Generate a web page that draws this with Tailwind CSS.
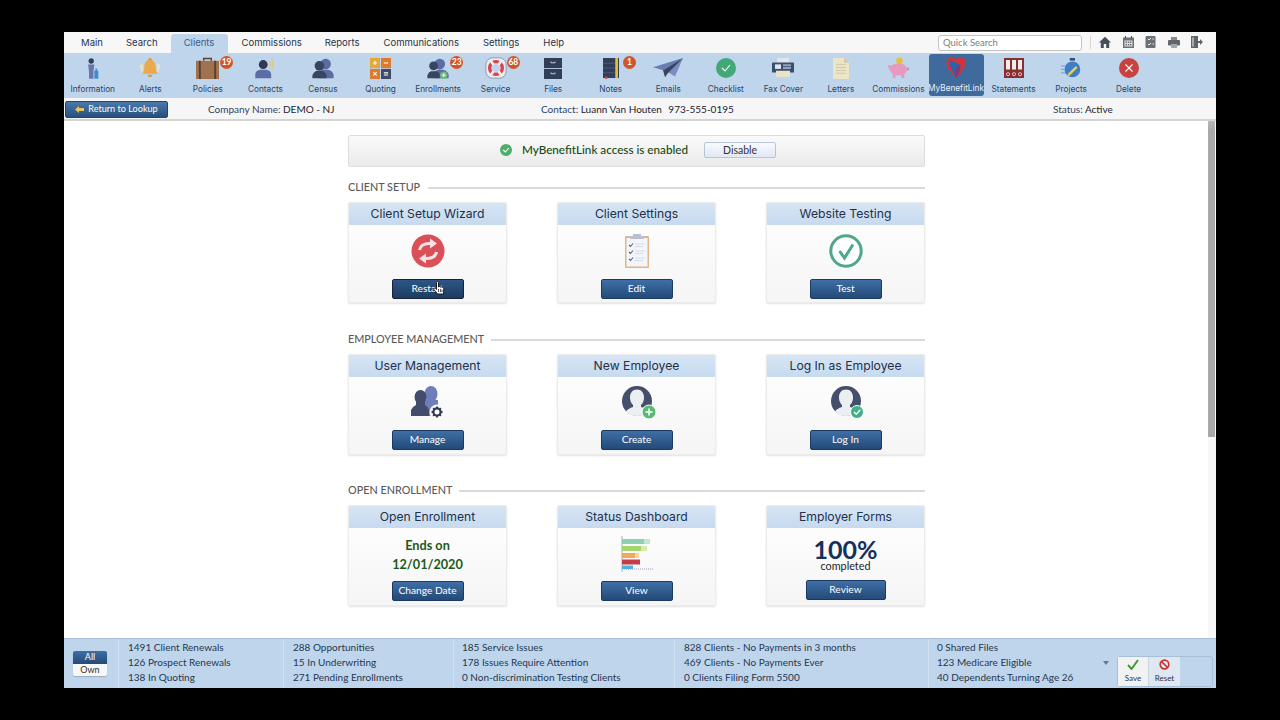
<!DOCTYPE html>
<html lang="en">
<head>
<meta charset="UTF-8">
<title>MyBenefitLink</title>
<script src="https://cdn.jsdelivr.net/npm/@tailwindcss/browser@4"></script>
</head>
<body class="bg-black">
<div class="w-[1280px] h-[720px] bg-black pt-[32px] pl-[64px] overflow-hidden font-['Lato',sans-serif]">
  <div class="w-[1152px] h-[656px] bg-white flex flex-col overflow-hidden">

    <!-- top menu -->
    <div class="h-[21px] shrink-0 bg-[#f7f7f7] flex items-center pt-[1px] pl-[6px] font-['Inter',sans-serif] text-[9.5px] text-[#26324a]">
      <div class="w-[44px] text-center">Main</div>
      <div class="ml-[12px]">Search</div>
      <div class="self-end h-[19px] w-[57px] ml-[13px] rounded-t-[3px] bg-[#bfd5ec] flex items-center justify-center text-[#3e5b84]">Clients</div>
      <div class="ml-[14px]">Commissions</div>
      <div class="ml-[23px]">Reports</div>
      <div class="ml-[24px]">Communications</div>
      <div class="ml-[24px]">Settings</div>
      <div class="ml-[24px]">Help</div>
      <div class="ml-auto flex items-center -mt-[1px]">
        <div class="w-[144px] h-[16px] rounded-[3px] border border-[#c4c4c4] bg-white px-[4px] text-[9.5px] leading-[14px] text-[#7c7c7c] font-['Lato',sans-serif]">Quick Search</div>
        <div class="w-px h-[13px] bg-[#d8d8d8] ml-[8px]"></div>
        <div class="flex items-center gap-[11.5px] ml-[8px] mr-[13px] -mt-[1px]">
          <svg class="w-[12px] h-[12px]" viewBox="0 0 12 12"><path d="M6 .8 0 6.400h1.800V12h3V8h2.400v4h3V6.400H12z" fill="#46505c"/></svg>
          <svg class="w-[11px] h-[12px]" viewBox="0 0 11 12"><path d="M0 1.500h11V12H0z" fill="#6b6f76"/><path d="M2 0h1v2.500H2zM8 0h1v2.500H8z" fill="#46505c"/><path d="M1.500 4.500h8v6h-8z" fill="#e4e4e4"/><path d="M2.500 5.500h1.500v1.500H2.500zM4.800 5.500h1.500v1.500H4.800zM7 5.500h1.500v1.500H7zM2.500 8h1.500v1.500H2.500zM4.800 8h1.500v1.500H4.800zM7 8h1.500v1.500H7z" fill="#6b6f76"/></svg>
          <svg class="w-[11px] h-[12px]" viewBox="0 0 11 12"><rect x=".5" width="10" height="12" rx="1" fill="#6b6f76"/><path d="m3 3 1 1 2-2M3 8l1 1 2-2M7.500 3H9M7.500 8H9" stroke="#eee" stroke-width="1" fill="none"/></svg>
          <svg class="w-[12px] h-[11px]" viewBox="0 0 12 11"><path d="M3 0h6v3H3z" fill="#868b91"/><rect y="3" width="12" height="5.500" rx="1" fill="#5f656c"/><path d="M3 7h6v4H3z" fill="#a2a6ab"/></svg>
          <svg class="w-[12px] h-[12px]" viewBox="0 0 12 12"><path d="M0 0h7v4H5.500V1.500h-4v9h4V8H7v4H0z" fill="#5f656c"/><path d="M2.500 1 7 0v12l-4.500-1z" fill="#5f656c"/><path d="M6 5h3V3l3 3-3 3V7H6z" fill="#5f656c"/></svg>
        </div>
      </div>
    </div>

    <!-- toolbar -->
    <div class="h-[45px] shrink-0 bg-[#bfd5ec] flex text-[8.25px] leading-[11px] text-[#2e4360] font-['Inter',sans-serif]">
      <div class="w-[57.55px] flex flex-col items-center justify-between pt-[4px] pb-[3px]">
        <svg class="w-[26px] h-[23px]" viewBox="0 0 26 26"><circle cx="11" cy="4.500" r="3" fill="#353f5c"/><path d="M7.500 8.500h7l-1 8.500v7.500h-5V17z" fill="#6877ab"/><path d="M14.500 15.500h4.500v9h-4.500z" fill="#3e8ecb"/><path d="M15.700 13h2v3h-2z" fill="#3e8ecb"/></svg>
        <span>Information</span>
      </div>
      <div class="w-[57.55px] flex flex-col items-center justify-between pt-[4px] pb-[3px]">
        <svg class="w-[24px] h-[23px]" viewBox="0 0 26 26"><path d="M1 10q2 7 4 8V8q-3 0-4 2zM25 10q-2 7-4 8V8q3 0 4 2z" fill="#e3e3cf"/><circle cx="13" cy="3" r="2" fill="#d79a3e"/><path d="M13 3c5 0 6.500 5 6.500 9 0 4 1.500 6 2.500 7H4c1-1 2.500-3 2.500-7 0-4 1.500-9 6.500-9z" fill="#eba94c"/><path d="M10 20h6q-1 3-3 3t-3-3z" fill="#d79a3e"/></svg>
        <span>Alerts</span>
      </div>
      <div class="w-[57.55px] flex flex-col items-center justify-between pt-[4px] pb-[3px] relative">
        <svg class="w-[25px] h-[23px]" viewBox="0 0 24 24"><path d="M8 4V1.500h8V4" fill="none" stroke="#5e3f2c" stroke-width="1.500"/><rect y="4" width="24" height="19" fill="#9f7350"/><path d="M3 4h2v19H3zM19 4h2v19h-2z" fill="#5e3f2c"/></svg>
        <span>Policies</span>
        <span class="absolute left-[41px] top-[3px] w-[13px] h-[13px] rounded-full bg-[#d0552a] text-white text-[8.5px] font-bold leading-[13px] text-center font-['Lato',sans-serif]">19</span>
      </div>
      <div class="w-[57.55px] flex flex-col items-center justify-between pt-[4px] pb-[3px]">
        <svg class="w-[24px] h-[23px]" viewBox="0 0 26 26"><circle cx="11" cy="8.500" r="5" fill="#2f3a54"/><path d="M2 24v-4q0-5 6-5.500h6q6 .5 6 5.500v4z" fill="#5d6ea6"/><path d="M18 4q2 4 0 8M20.500 2.500q3 5.500 0 11" stroke="#e6c66c" stroke-width="1.300" fill="none"/></svg>
        <span>Contacts</span>
      </div>
      <div class="w-[57.55px] flex flex-col items-center justify-between pt-[4px] pb-[3px]">
        <svg class="w-[24px] h-[23px]" viewBox="0 0 26 26"><circle cx="16" cy="8" r="6" fill="#5b6ba3"/><path d="M8 24v-4q1-4 5-5.500h6q5 1.500 6 5.500v4z" fill="#5b6ba3"/><circle cx="9" cy="10" r="5.500" fill="#39445f"/><path d="M1 24v-3q1-4 5-5.500h6q4 1.500 5 5.500v3z" fill="#39445f"/></svg>
        <span>Census</span>
      </div>
      <div class="w-[57.55px] flex flex-col items-center justify-between pt-[5px] pb-[3px]">
        <svg class="w-[21px] h-[21px]" viewBox="0 0 22 24" preserveAspectRatio="none"><path d="M0 0h10.500v11.500H0z" fill="#e5a834"/><path d="M11.500 0H22v11.500H11.500z" fill="#de7a2e"/><path d="M0 12.500h10.500V24H0z" fill="#de7a2e"/><path d="M11.500 12.500H22V24H11.500z" fill="#3e4a67"/><path d="M3 5.700h4.500M5.200 3.500V8M14.500 5.700H19M3.400 16l3.700 4M7.100 16l-3.700 4M14.500 17h4.500M14.500 19.500h4.500" stroke="#fff" stroke-width="1.200"/></svg>
        <span>Quoting</span>
      </div>
      <div class="w-[57.55px] flex flex-col items-center justify-between pt-[4px] pb-[3px] relative">
        <svg class="w-[24px] h-[23px]" viewBox="0 0 26 26"><circle cx="15" cy="8" r="6" fill="#5b6ba3"/><path d="M8 24v-4q1-4 5-5.500h6q5 1.500 6 5.500v4z" fill="#5b6ba3"/><circle cx="8" cy="10" r="5" fill="#39445f"/><path d="M1 24v-3q1-4 4-5h6q4 1 4 5v3z" fill="#39445f"/><circle cx="19.500" cy="20.500" r="4.200" fill="#6cb97c"/><path d="M17.300 20.500h4.400M19.500 18.300v4.400" stroke="#fff" stroke-width="1.100"/></svg>
        <span>Enrollments</span>
        <span class="absolute left-[41px] top-[3px] w-[13px] h-[13px] rounded-full bg-[#d0552a] text-white text-[8.5px] font-bold leading-[13px] text-center font-['Lato',sans-serif]">23</span>
      </div>
      <div class="w-[57.55px] flex flex-col items-center justify-between pt-[4px] pb-[3px] relative">
        <svg class="w-[24px] h-[22px]" viewBox="0 0 26 26"><rect x="1" y="1" width="24" height="24" rx="8" fill="#e9edf1" stroke="#6f7a86" stroke-width=".8"/><circle cx="13" cy="13" r="7.500" fill="none" stroke="#d9434d" stroke-width="4"/><circle cx="13" cy="13" r="4.800" fill="#bfd5ec"/><path d="M7 5l3 4M19 5l-3 4M7 21l3-4M19 21l-3-4" stroke="#f5f5f5" stroke-width="3"/></svg>
        <span>Service</span>
        <span class="absolute left-[40px] top-[3px] w-[13px] h-[13px] rounded-full bg-[#d0552a] text-white text-[8.5px] font-bold leading-[13px] text-center font-['Lato',sans-serif]">68</span>
      </div>
      <div class="w-[57.55px] flex flex-col items-center justify-between pt-[5px] pb-[3px]">
        <svg class="w-[18px] h-[21px]" viewBox="0 0 18 24" preserveAspectRatio="none"><rect width="18" height="11.500" fill="#323d57"/><rect y="12.500" width="18" height="11.500" fill="#323d57"/><path d="M7 4v1.500h4V4M7 16.500V18h4v-1.500" stroke="#dfe6ee" stroke-width=".9" fill="none"/></svg>
        <span>Files</span>
      </div>
      <div class="w-[57.55px] flex flex-col items-center justify-between pt-[5px] pb-[3px] relative">
        <svg class="w-[16px] h-[21px]" viewBox="0 0 15 22" preserveAspectRatio="none"><rect width="15" height="21" fill="#323d57"/><path d="M0 5h12v1H0zM0 10h12v1H0zM0 15h12v1H0z" fill="#4b5a78"/><path d="M11.500 0h2.500v21h-2.500z" fill="#e5c235"/><circle cx="3" cy="20.500" r="1.500" fill="#b7443c"/></svg>
        <span>Notes</span>
        <span class="absolute left-[41px] top-[3px] w-[13px] h-[13px] rounded-full bg-[#d0552a] text-white text-[8.5px] font-bold leading-[13px] text-center font-['Lato',sans-serif]">1</span>
      </div>
      <div class="w-[57.55px] flex flex-col items-center justify-between pt-[5px] pb-[3px]">
        <svg class="w-[30px] h-[21px]" viewBox="0 0 30 24" preserveAspectRatio="none"><path d="M0 10.500 30 0 10 14z" fill="#6b7cb3"/><path d="M30 0 22 21 12 14z" fill="#7a8cc2"/><path d="M30 0 10 14l2 8 3-5z" fill="#39445f"/></svg>
        <span>Emails</span>
      </div>
      <div class="w-[57.55px] flex flex-col items-center justify-between pt-[5px] pb-[3px]">
        <svg class="w-[20px] h-[20px]" viewBox="0 0 20 20"><circle cx="10" cy="10" r="10" fill="#43a878"/><path d="m6 10 3 3 5-6" stroke="#fff" stroke-width="1.100" fill="none"/></svg>
        <span>Checklist</span>
      </div>
      <div class="w-[57.55px] flex flex-col items-center justify-between pt-[5px] pb-[3px]">
        <svg class="w-[22px] h-[20px]" viewBox="0 0 22 22" preserveAspectRatio="none"><path d="M5 0h12v6H5z" fill="#dfe5ea"/><rect y="5" width="22" height="11" rx="1" fill="#3d4d6d"/><path d="M3 7h6v5H3z" fill="#dfe6ee"/><path d="M11 7h8v2h-8zM11 10h8v2h-8z" fill="#8fa2bf"/><path d="M4 14h14v7H4z" fill="#e8e3c8"/></svg>
        <span>Fax Cover</span>
      </div>
      <div class="w-[57.55px] flex flex-col items-center justify-between pt-[5px] pb-[3px]">
        <svg class="w-[16px] h-[21px]" viewBox="0 0 16 22" preserveAspectRatio="none"><path d="M0 0h11l5 5v17H0z" fill="#ece6c8"/><path d="m11 0 5 5h-5z" fill="#cfc8a6"/><path d="M3 7h10M3 10h10M3 13h10M3 16h10" stroke="#cfc9a8"/></svg>
        <span>Letters</span>
      </div>
      <div class="w-[57.55px] flex flex-col items-center justify-between pt-[4px] pb-[3px]">
        <svg class="w-[21px] h-[21px]" viewBox="0 0 22 22"><circle cx="12" cy="4" r="3.500" fill="#e8bd45"/><ellipse cx="11" cy="13" rx="9" ry="6.500" fill="#e79abf"/><path d="M5 17h3v5H5zM14 17h3v5h-3z" fill="#e79abf"/><path d="M0 8l4 1v4H1z" fill="#e79abf"/><path d="M20 11h2v3h-2z" fill="#d985ad"/></svg>
        <span>Commissions</span>
      </div>
      <div class="w-[55px] h-[42px] ml-[1.300px] mr-[1.250px] mt-[1px] pt-[3px] pb-[2px] rounded-[3px] bg-[#3f6a9c] flex flex-col items-center justify-between text-[#e8f0f8] overflow-hidden">
        <svg class="w-[20px] h-[21px] shrink-0" viewBox="0 0 20 22"><path d="M10 22C5 17 0 11 0 6c0-4 3-6 5.500-6C8 0 9 1 10 3c1.500-2 3-3 5-3 3 0 5 2.500 5 6 0 5-5 11-10 16z" fill="#d0343d"/><path d="M2 3.500C6 4 10 6 15 9c-1 5-3 9-5 13C7 16 3.500 9 2 3.500z" fill="#2a63ad"/><path d="M15 9c-2 0-4 1-5 3 0 3 0 7 0 10 2-4 4-8 5-13z" fill="#7b3b78"/></svg>
        <span class="whitespace-nowrap">MyBenefitLink</span>
      </div>
      <div class="w-[57.55px] flex flex-col items-center justify-between pt-[5px] pb-[3px]">
        <svg class="w-[20px] h-[20px]" viewBox="0 0 20 21" preserveAspectRatio="none"><rect width="20" height="21" fill="#8a2e31"/><path d="M2 2h4v10H2zM8 2h4v10H8zM14 2h4v10h-4z" fill="#f2ecec"/><circle cx="4" cy="17" r="1.600" fill="none" stroke="#eee" stroke-width=".8"/><circle cx="10" cy="17" r="1.600" fill="none" stroke="#eee" stroke-width=".8"/><circle cx="16" cy="17" r="1.600" fill="none" stroke="#eee" stroke-width=".8"/></svg>
        <span>Statements</span>
      </div>
      <div class="w-[57.55px] flex flex-col items-center justify-between pt-[5px] pb-[3px]">
        <svg class="w-[21px] h-[21px]" viewBox="0 0 24 24"><circle cx="13" cy="13" r="9" fill="#3f7ec4"/><path d="M0 9h5M0 13h4M0 17h5" stroke="#7fa9d6" stroke-width="1.500"/><path d="M10 0h6v3h-6z" fill="#3f4d6e"/><path d="m8 18 9-9 2 2-9 9-3 1z" fill="#e4cf5a"/></svg>
        <span>Projects</span>
      </div>
      <div class="w-[57.55px] flex flex-col items-center justify-between pt-[5px] pb-[3px]">
        <svg class="w-[20px] h-[20px]" viewBox="0 0 20 20"><circle cx="10" cy="10" r="10" fill="#c8433f"/><path d="m6.500 6.500 7 7M13.500 6.500l-7 7" stroke="#fff" stroke-width="1.100"/></svg>
        <span>Delete</span>
      </div>
    </div>

    <!-- client info -->
    <div class="h-[23px] shrink-0 bg-[#f6f6f6] border-b-2 border-[#d4d4d4] flex items-center pt-[1px] text-[10px] text-[#1c2230]">
      <div class="w-[103px] h-[17px] ml-[1px] rounded-[2px] border border-[#23456f] bg-gradient-to-b from-[#4c79ab] to-[#27507f] text-white text-[9.1px] flex items-center justify-center gap-[4px]">
        <svg class="w-[9px] h-[7px]" viewBox="0 0 9 7"><path d="M0 3.500 4 0v2h5v3H4v2z" fill="#eac45a"/></svg>
        Return to Lookup
      </div>
      <div class="ml-[40px] w-[333px]"><span class="text-[#2c4468]">Company Name:</span> DEMO - NJ</div>
      <div class="w-[512px]"><span class="text-[#2c4468]">Contact:</span> Luann Van Houten <span class="ml-[4px]">973-555-0195</span></div>
      <div><span class="text-[#2c4468]">Status:</span> Active</div>
    </div>

    <!-- main area -->
    <div class="flex-1 min-h-0 flex overflow-hidden">
      <div class="w-[1144px] pl-[284px] pt-[14px]">
        <div class="w-[577px]">
          <div class="h-[32px] rounded-[2px] border border-[#dcdcdc] bg-gradient-to-b from-[#fafafa] to-[#ebebeb] flex items-center justify-center pl-[3px] pb-[2px] text-[11.7px]">
            <svg class="w-[12px] h-[12px]" viewBox="0 0 12 12"><circle cx="6" cy="6" r="6" fill="#4caf6a"/><path d="m3.300 6 2 2 3.500-4" stroke="#fff" stroke-width="1.100" fill="none"/></svg>
            <span class="ml-[10px] font-medium text-[#154a12]">MyBenefitLink access is enabled</span>
            <button class="ml-[16px] w-[72px] h-[16px] rounded-[2px] border border-[#b9c5d4] bg-gradient-to-b from-[#f8fafd] to-[#e2e9f4] text-[10.5px] leading-[14px] text-[#333]">Disable</button>
          </div>

          <div class="mt-[14px] h-[13px] flex items-center text-[10.8px] font-medium text-[#5a5a5a]"><span>CLIENT SETUP</span><div class="flex-1 h-[2px] bg-[#dadada] ml-[8px]"></div></div>
          <div class="mt-[8px] flex justify-between">
            <div class="w-[159px] h-[101px] rounded-[2px] border border-[#ececec] shadow-[0_1px_2px_rgba(0,0,0,0.12)] bg-gradient-to-b from-white to-[#f5f5f5] flex flex-col items-center">
              <div class="w-full h-[22px] bg-gradient-to-b from-[#d7e5f4] to-[#c6daef] text-center text-[12.2px] leading-[21px] text-[#223049] font-['Inter',sans-serif]">Client Setup Wizard</div>
              <svg class="w-[34px] h-[34px] mt-[9px]" viewBox="0 0 34 34"><circle cx="17" cy="17" r="16.500" fill="#db4f58"/><path d="M8.500 16Q9.500 9.500 19 9.500" stroke="#f6e4e4" stroke-width="3" fill="none"/><path d="m19 4.500 7 5-7 5z" fill="#f6e4e4"/><path d="M25.500 18Q24.500 24.500 15 24.500" stroke="#f6e4e4" stroke-width="3" fill="none"/><path d="m15 19.500-7 5 7 5z" fill="#f6e4e4"/></svg>
              <button class="mt-[11px] w-[72px] h-[20px] rounded-[2px] border border-[#15243d] bg-gradient-to-b from-[#2d5684] to-[#1d3c62] text-white text-[10.2px]">Restart</button>
            </div>
            <div class="w-[159px] h-[101px] rounded-[2px] border border-[#ececec] shadow-[0_1px_2px_rgba(0,0,0,0.12)] bg-gradient-to-b from-white to-[#f5f5f5] flex flex-col items-center">
              <div class="w-full h-[22px] bg-gradient-to-b from-[#d7e5f4] to-[#c6daef] text-center text-[12.2px] leading-[21px] text-[#223049] font-['Inter',sans-serif]">Client Settings</div>
              <svg class="w-[26px] h-[34px] mt-[9px]" viewBox="0 0 26 34"><rect x="1" y="2" width="24" height="32" rx="1" fill="#deb48c"/><rect x="2.500" y="4" width="21" height="28.500" fill="#f4f5f8"/><path d="M9 0h8v2h3v3H6V2h3z" fill="#b8c0d2"/><path d="m5 11 1.500 1.500L9 9.500M5 18l1.500 1.500L9 16.500M5 25l1.500 1.500L9 23.500" stroke="#59657f" stroke-width="1.100" fill="none"/><path d="M11 10h10M11 12.500h8M11 17h10M11 19.500h8M11 24h10M11 26.500h8" stroke="#d4dbe8"/></svg>
              <button class="mt-[11px] w-[72px] h-[20px] rounded-[2px] border border-[#1a3a63] bg-gradient-to-b from-[#3f6fa5] to-[#244a78] text-white text-[10.2px]">Edit</button>
            </div>
            <div class="w-[159px] h-[101px] rounded-[2px] border border-[#ececec] shadow-[0_1px_2px_rgba(0,0,0,0.12)] bg-gradient-to-b from-white to-[#f5f5f5] flex flex-col items-center">
              <div class="w-full h-[22px] bg-gradient-to-b from-[#d7e5f4] to-[#c6daef] text-center text-[12.2px] leading-[21px] text-[#223049] font-['Inter',sans-serif]">Website Testing</div>
              <svg class="w-[34px] h-[34px] mt-[9px]" viewBox="0 0 34 34"><circle cx="17" cy="17" r="15.200" fill="#fff" stroke="#4ea887" stroke-width="3"/><path d="m10.500 17 5 7L24 10.500" stroke="#4ea887" stroke-width="3" fill="none"/></svg>
              <button class="mt-[11px] w-[72px] h-[20px] rounded-[2px] border border-[#1a3a63] bg-gradient-to-b from-[#3f6fa5] to-[#244a78] text-white text-[10.2px]">Test</button>
            </div>
          </div>

          <div class="mt-[30px] h-[13px] flex items-center text-[10.8px] font-medium text-[#5a5a5a]"><span>EMPLOYEE MANAGEMENT</span><div class="flex-1 h-[2px] bg-[#dadada] ml-[7px]"></div></div>
          <div class="mt-[8px] flex justify-between">
            <div class="w-[159px] h-[101px] rounded-[2px] border border-[#ececec] shadow-[0_1px_2px_rgba(0,0,0,0.12)] bg-gradient-to-b from-white to-[#f5f5f5] flex flex-col items-center">
              <div class="w-full h-[22px] bg-gradient-to-b from-[#d7e5f4] to-[#c6daef] text-center text-[12.2px] leading-[21px] text-[#223049] font-['Inter',sans-serif]">User Management</div>
              <svg class="w-[34px] h-[34px] mt-[9px]" viewBox="0 0 34 34"><ellipse cx="20" cy="8" rx="6.500" ry="8" fill="#6f7eb8"/><path d="M13 14h14v5l4 3v8H11z" fill="#6f7eb8"/><path d="M8 30V19h16v11z" fill="#6f7eb8"/><ellipse cx="9.500" cy="11" rx="6" ry="7" fill="#414d6b"/><path d="M0 30v-6q1-3 5-5v-3h9v3q3 1.500 4 5v6z" fill="#414d6b"/><circle cx="26" cy="26" r="7.500" fill="#fbfbfb"/><circle cx="26" cy="26" r="3.600" fill="none" stroke="#303a52" stroke-width="2.200"/><path d="M26 20.500v2M26 29.500v2M20.500 26h2M29.500 26h2M22.100 22.100l1.400 1.400M28.500 28.500l1.400 1.400M29.900 22.100l-1.400 1.400M23.500 28.500l-1.400 1.400" stroke="#303a52" stroke-width="1.800"/></svg>
              <button class="mt-[10px] w-[72px] h-[20px] rounded-[2px] border border-[#1a3a63] bg-gradient-to-b from-[#3f6fa5] to-[#244a78] text-white text-[10.2px]">Manage</button>
            </div>
            <div class="w-[159px] h-[101px] rounded-[2px] border border-[#ececec] shadow-[0_1px_2px_rgba(0,0,0,0.12)] bg-gradient-to-b from-white to-[#f5f5f5] flex flex-col items-center">
              <div class="w-full h-[22px] bg-gradient-to-b from-[#d7e5f4] to-[#c6daef] text-center text-[12.2px] leading-[21px] text-[#223049] font-['Inter',sans-serif]">New Employee</div>
              <svg class="w-[34px] h-[34px] mt-[9px] overflow-visible" viewBox="0 0 34 34"><circle cx="17" cy="15" r="15" fill="#454f6b"/><path d="M17 3.500c4.500 0 7 3.500 7 8 0 3-1 5.500-3 7.500v2c3 1 6 2.500 7 4.500q-4 4.500-11 4.500T6 25.500c1-2 4-3.500 7-4.500v-2c-2-2-3-4.500-3-7.500 0-4.500 2.500-8 7-8z" fill="#eceef1"/><circle cx="29" cy="26" r="7" fill="#5bb875" stroke="#fff"/><path d="M25.500 26h7M29 22.500v7" stroke="#fff" stroke-width="1.500"/></svg>
              <button class="mt-[10px] w-[72px] h-[20px] rounded-[2px] border border-[#1a3a63] bg-gradient-to-b from-[#3f6fa5] to-[#244a78] text-white text-[10.2px]">Create</button>
            </div>
            <div class="w-[159px] h-[101px] rounded-[2px] border border-[#ececec] shadow-[0_1px_2px_rgba(0,0,0,0.12)] bg-gradient-to-b from-white to-[#f5f5f5] flex flex-col items-center">
              <div class="w-full h-[22px] bg-gradient-to-b from-[#d7e5f4] to-[#c6daef] text-center text-[12.2px] leading-[21px] text-[#223049] font-['Inter',sans-serif]">Log In as Employee</div>
              <svg class="w-[34px] h-[34px] mt-[9px] overflow-visible" viewBox="0 0 34 34"><circle cx="17" cy="15" r="15" fill="#454f6b"/><path d="M17 3.500c4.500 0 7 3.500 7 8 0 3-1 5.500-3 7.500v2c3 1 6 2.500 7 4.500q-4 4.500-11 4.500T6 25.500c1-2 4-3.500 7-4.500v-2c-2-2-3-4.500-3-7.500 0-4.500 2.500-8 7-8z" fill="#eceef1"/><circle cx="28" cy="26" r="6.500" fill="#3fb08a" stroke="#fff"/><path d="m25 26 2.300 2.300 4-4.500" stroke="#fff" stroke-width="1.300" fill="none"/></svg>
              <button class="mt-[10px] w-[72px] h-[20px] rounded-[2px] border border-[#1a3a63] bg-gradient-to-b from-[#3f6fa5] to-[#244a78] text-white text-[10.2px]">Log In</button>
            </div>
          </div>

          <div class="mt-[29px] h-[13px] flex items-center text-[10.8px] font-medium text-[#5a5a5a]"><span>OPEN ENROLLMENT</span><div class="flex-1 h-[2px] bg-[#dadada] ml-[7px]"></div></div>
          <div class="mt-[8px] flex justify-between">
            <div class="w-[159px] h-[101px] rounded-[2px] border border-[#ececec] shadow-[0_1px_2px_rgba(0,0,0,0.12)] bg-gradient-to-b from-white to-[#f5f5f5] flex flex-col items-center">
              <div class="w-full h-[22px] bg-gradient-to-b from-[#d7e5f4] to-[#c6daef] text-center text-[12.2px] leading-[21px] text-[#223049] font-['Inter',sans-serif]">Open Enrollment</div>
              <div class="mt-[8px] text-center text-[12.7px] font-bold leading-[19px] text-[#1d5a18]">Ends on<br>12/01/2020</div>
              <button class="mt-[7px] w-[72px] h-[20px] rounded-[2px] border border-[#1a3a63] bg-gradient-to-b from-[#3f6fa5] to-[#244a78] text-white text-[10.2px]">Change Date</button>
            </div>
            <div class="w-[159px] h-[101px] rounded-[2px] border border-[#ececec] shadow-[0_1px_2px_rgba(0,0,0,0.12)] bg-gradient-to-b from-white to-[#f5f5f5] flex flex-col items-center">
              <div class="w-full h-[22px] bg-gradient-to-b from-[#d7e5f4] to-[#c6daef] text-center text-[12.2px] leading-[21px] text-[#223049] font-['Inter',sans-serif]">Status Dashboard</div>
              <svg class="w-[34px] h-[36px] mt-[8px]" viewBox="0 0 34 36"><path d="M2 0v36" stroke="#a8aebb"/><path d="M2 33h32" stroke="#c8ccd6" stroke-dasharray="1 1" stroke-width="2"/><path d="M2 3h22v5H2z" fill="#8fd0b0"/><path d="M24 3h6v5h-6z" fill="#c4e6d5"/><path d="M2 10h19v5H2z" fill="#a5d66e"/><path d="M21 10h6v5h-6z" fill="#d6ecae"/><path d="M2 17h13v5H2z" fill="#f0a95a"/><path d="M15 17h4v5h-4z" fill="#f7d6a6"/><path d="M2 23.500h18v5H2z" fill="#c43c48"/><path d="M2 29.500h11v3.500H2z" fill="#4fb0e0"/></svg>
              <button class="mt-[9px] w-[72px] h-[20px] rounded-[2px] border border-[#1a3a63] bg-gradient-to-b from-[#3f6fa5] to-[#244a78] text-white text-[10.2px]">View</button>
            </div>
            <div class="w-[159px] h-[101px] rounded-[2px] border border-[#ececec] shadow-[0_1px_2px_rgba(0,0,0,0.12)] bg-gradient-to-b from-white to-[#f5f5f5] flex flex-col items-center">
              <div class="w-full h-[22px] bg-gradient-to-b from-[#d7e5f4] to-[#c6daef] text-center text-[12.2px] leading-[21px] text-[#223049] font-['Inter',sans-serif]">Employer Forms</div>
              <div class="mt-[9px] text-[25px] font-bold leading-[24px] text-[#14305e]">100%</div>
              <div class="text-[10.8px] leading-[10px] text-[#222]">completed</div>
              <button class="mt-[9px] w-[80px] h-[20px] rounded-[2px] border border-[#1a3a63] bg-gradient-to-b from-[#3f6fa5] to-[#244a78] text-white text-[10.2px]">Review</button>
            </div>
          </div>
        </div>
      </div>
      <div class="w-[8px] bg-[#f7f7f7]">
        <div class="w-[7px] h-[316px] bg-gradient-to-b from-[#b8b8b8] to-[#a9a9a9] to-[3%]"></div>
      </div>
    </div>

    <!-- stats footer -->
    <div class="h-[50px] shrink-0 bg-[#bfd5ec] border-t border-[#a9bfd6] flex items-center text-[10px] leading-[14.75px] text-[#26374f] relative">
      <div class="ml-[9px] w-[34px] h-[25px] rounded-[2px] shadow-[0_1px_1px_rgba(0,0,0,0.2)] flex flex-col text-[9px] text-center">
        <div class="h-[12.500px] leading-[12.500px] bg-gradient-to-b from-[#3f6fa5] to-[#244a78] text-white rounded-t-[2px]">All</div>
        <div class="h-[12.500px] leading-[12.500px] bg-[#f7f7f7] text-[#333] rounded-b-[2px]">Own</div>
      </div>
      <div class="ml-[11px] w-[165px] h-full border-l border-[#d2e1f1] pl-[9px] pb-[2px] flex flex-col justify-center"><div>1491 Client Renewals</div><div>126 Prospect Renewals</div><div>138 In Quoting</div></div>
      <div class="w-[170px] h-full border-l border-[#d2e1f1] pl-[9px] pb-[2px] flex flex-col justify-center"><div>288 Opportunities</div><div>15 In Underwriting</div><div>271 Pending Enrollments</div></div>
      <div class="w-[221px] h-full border-l border-[#d2e1f1] pl-[8px] pb-[2px] flex flex-col justify-center"><div>185 Service Issues</div><div>178 Issues Require Attention</div><div>0 Non-discrimination Testing Clients</div></div>
      <div class="w-[254px] h-full border-l border-[#d2e1f1] pl-[9px] pb-[2px] flex flex-col justify-center"><div>828 Clients - No Payments in 3 months</div><div>469 Clients - No Payments Ever</div><div>0 Clients Filing Form 5500</div></div>
      <div class="w-[170px] h-full border-l border-[#d2e1f1] pl-[8px] pb-[2px] flex flex-col justify-center"><div>0 Shared Files</div><div>123 Medicare Eligible</div><div>40 Dependents Turning Age 26</div></div>
      <svg class="absolute left-[1039px] top-[22px] w-[6px] h-[4px]" viewBox="0 0 6 4"><path d="M0 0h6L3 4z" fill="#5f7896"/></svg>
      <div class="absolute left-[1053px] top-[17px] w-[96px] h-[31px] rounded-[3px] border border-[#a8bfd8] flex text-[8px] text-[#26374f] text-center">
        <div class="w-[30px] h-full bg-[#f2f2f2] flex flex-col items-center">
          <svg class="w-[12px] h-[11px] mt-[2px]" viewBox="0 0 12 11"><path d="m1 6 3.500 4L11 1" stroke="#3f9a3c" stroke-width="2" fill="none"/></svg>
          <span class="mt-[3px] leading-[10px]">Save</span>
        </div>
        <div class="w-[32px] h-full bg-[#dfe8f2] border-l border-[#c8d4e0] flex flex-col items-center">
          <svg class="w-[11px] h-[11px] mt-[2px]" viewBox="0 0 11 11"><circle cx="5.500" cy="5.500" r="4.300" fill="none" stroke="#c8342f" stroke-width="1.700"/><path d="m2.500 2.500 6 6" stroke="#c8342f" stroke-width="1.700"/></svg>
          <span class="mt-[3px] leading-[10px]">Reset</span>
        </div>
      </div>
    </div>
  </div>
</div>
<!-- mouse cursor -->
<svg class="absolute left-[433px] top-[281px] w-[12px] h-[14px]" viewBox="0 0 12 14"><path d="M3.500 1.500c0-1.300 2-1.300 2 0V6c.5-.8 1.700-.6 1.900.2.500-.6 1.500-.4 1.700.4.500-.4 1.500-.2 1.700.7L10.500 13H4.500L1 8.500c-.6-1 .7-2 1.500-1.200L3.500 8.500z" fill="#fff" stroke="#111" stroke-width=".9"/><path d="M5.500 8v3M7.500 8v3M9 8.500V11" stroke="#111" stroke-width=".7"/></svg>
</body>
</html>
